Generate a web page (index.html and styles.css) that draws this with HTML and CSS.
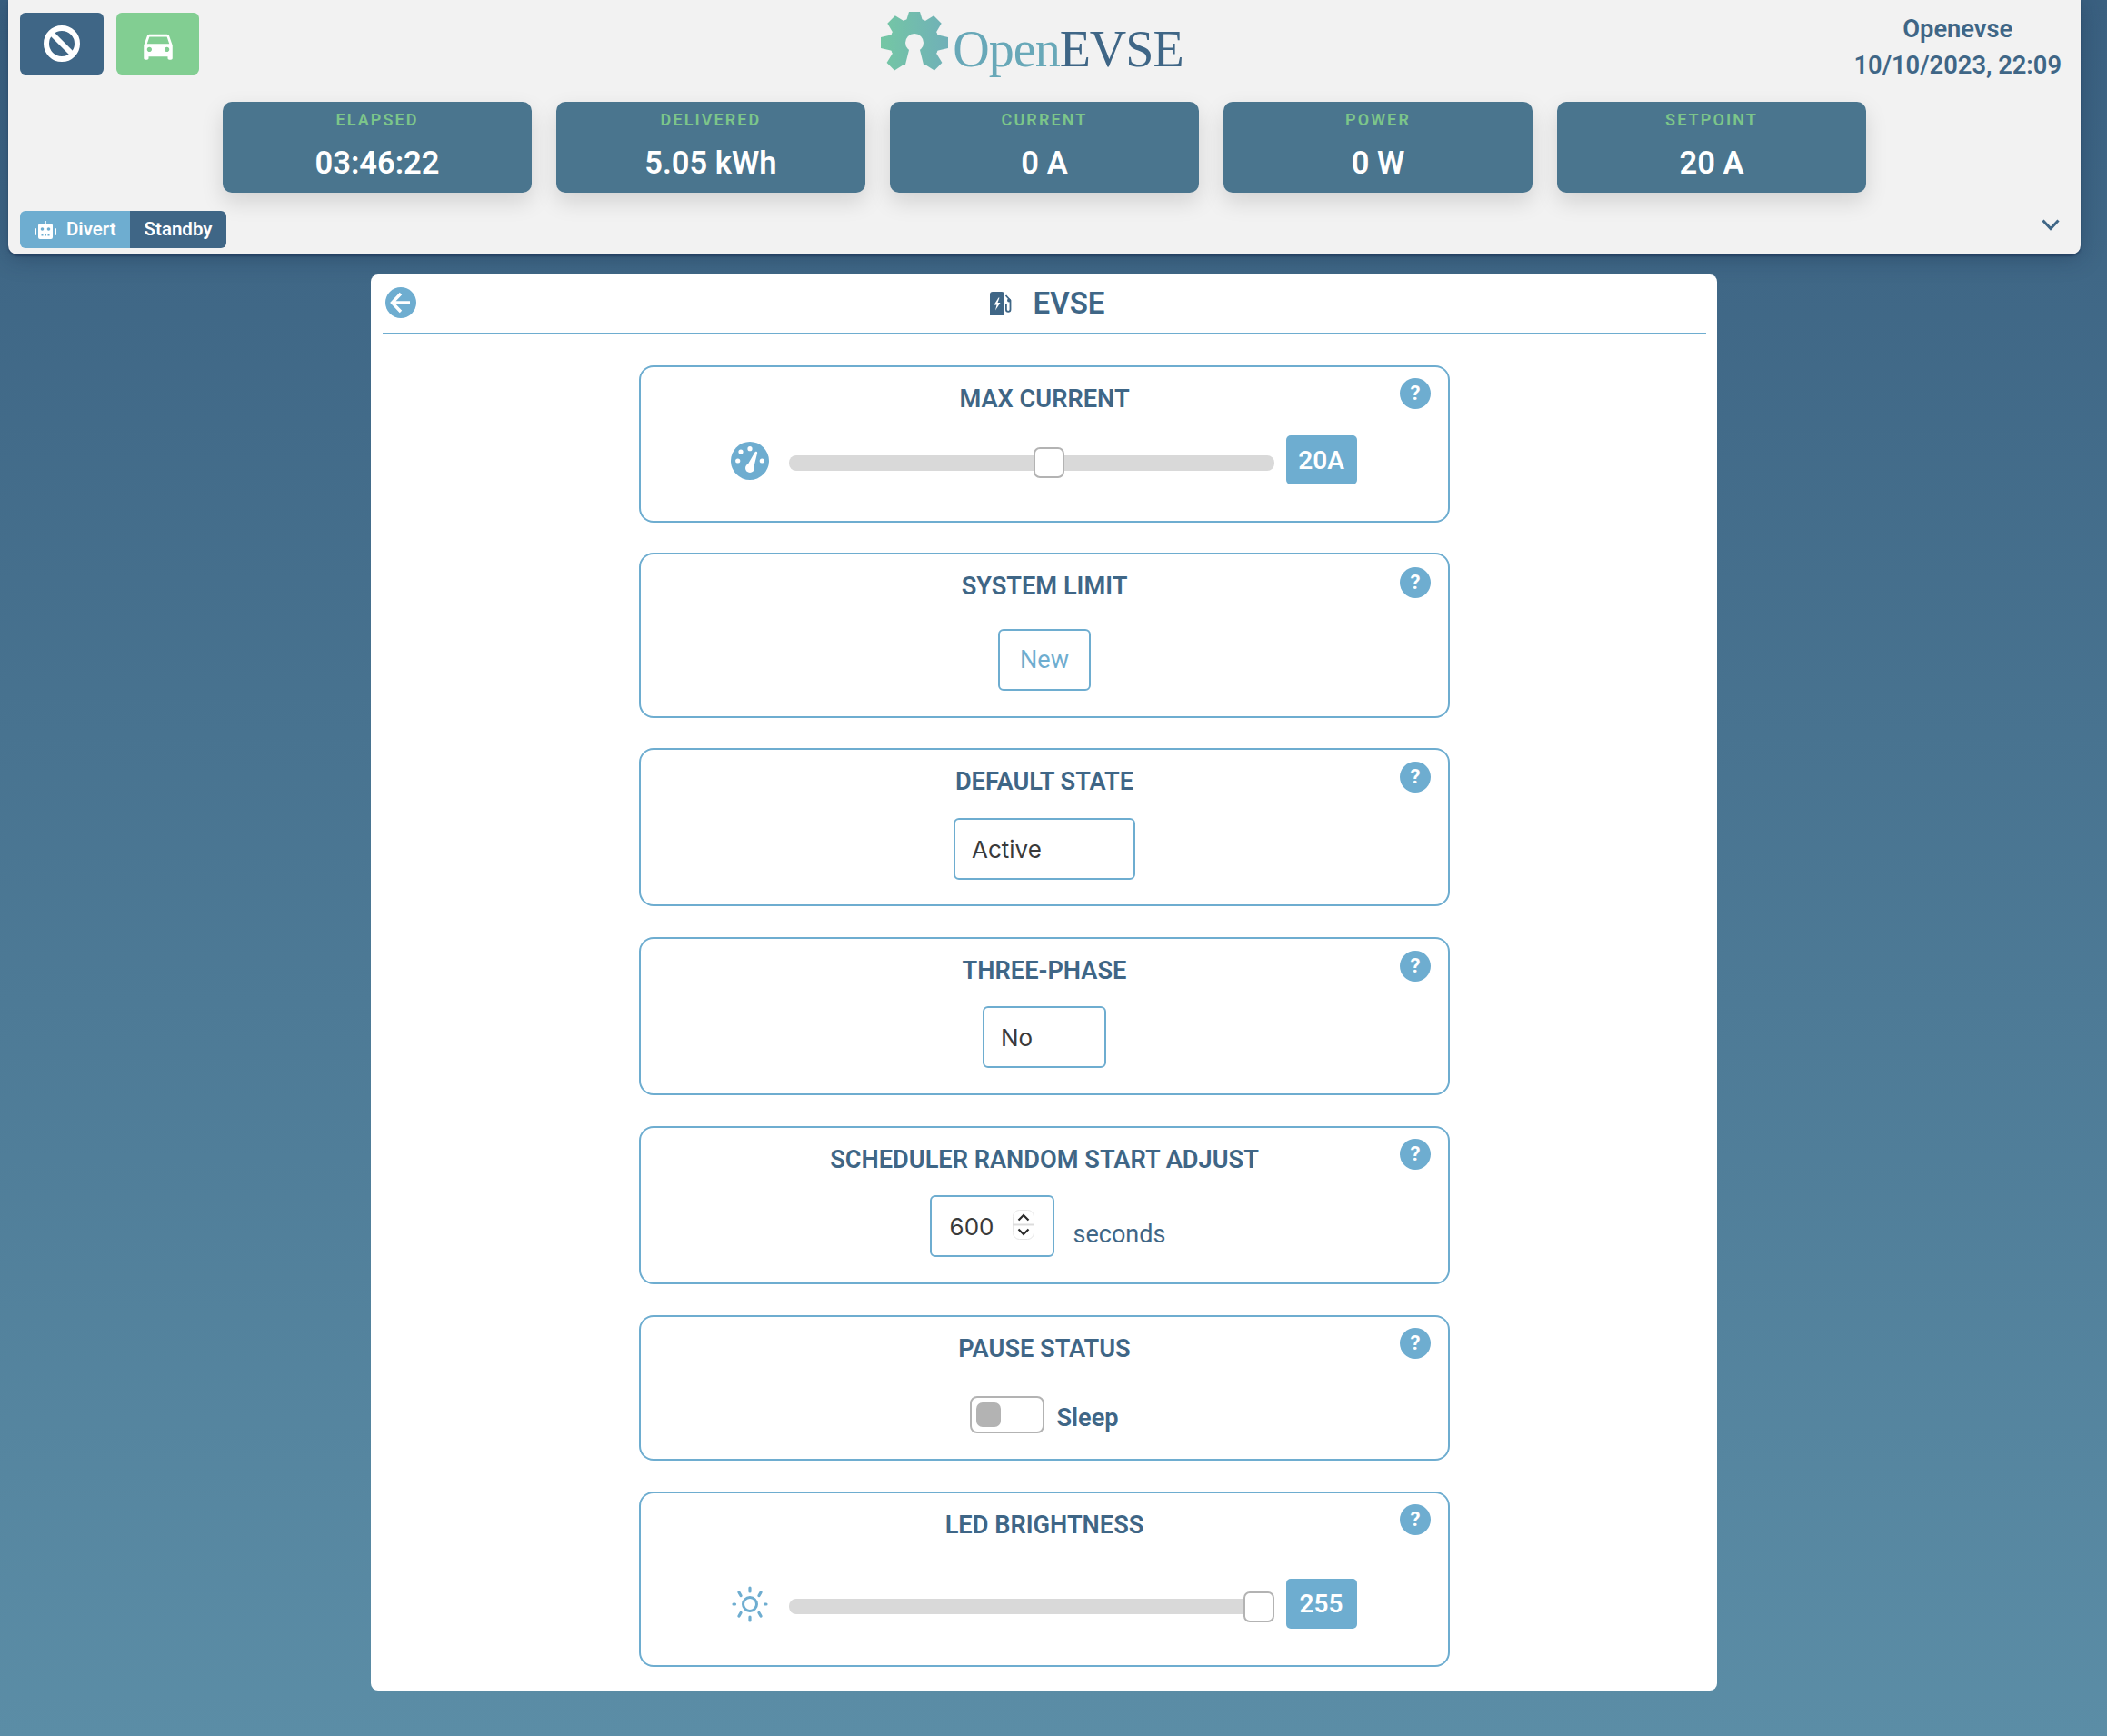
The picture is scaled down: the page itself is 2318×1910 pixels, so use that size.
FILE: index.html
```html
<!DOCTYPE html>
<html lang="en">
<head>
<meta charset="utf-8">
<title>OpenEVSE</title>
<link rel="stylesheet" href="styles.css">
</head>
<body>
<header class="topbar">
  <div class="top-row">
    <div class="mode-buttons">
      <div class="mode-btn mode-btn-dark">
        <svg class="icon-block" viewBox="0 0 40 40"><circle cx="20" cy="20" r="17" fill="none" stroke="#fff" stroke-width="6"/><path d="M8 8l24 24" stroke="#fff" stroke-width="6" fill="none"/></svg>
      </div>
      <div class="mode-btn mode-btn-green">
        <svg class="icon-car" viewBox="0 0 24 24"><path fill="#fff" d="M18.92 6.01C18.72 5.42 18.16 5 17.5 5h-11c-.66 0-1.21.42-1.42 1.01L3 12v8c0 .55.45 1 1 1h1c.55 0 1-.45 1-1v-1h12v1c0 .55.45 1 1 1h1c.55 0 1-.45 1-1v-8l-2.08-5.99zM6.5 16c-.83 0-1.5-.67-1.5-1.5S5.67 13 6.5 13s1.5.67 1.5 1.5S7.33 16 6.5 16zm11 0c-.83 0-1.5-.67-1.5-1.5s.67-1.5 1.5-1.5 1.5.67 1.5 1.5-.67 1.5-1.5 1.5zM5 11l1.5-4.5h11L19 11H5z"/></svg>
      </div>
    </div>
    <div class="logo">
      <svg class="logo-gear" viewBox="-37 -34 74 65">
        <defs>
          <linearGradient id="gearFill" x1="0" y1="0" x2="1" y2="0"><stop offset="0" stop-color="#74c7a4"/><stop offset="1" stop-color="#70b0b8"/></linearGradient>
          <mask id="gearMask" maskUnits="userSpaceOnUse" x="-37" y="-34" width="74" height="65">
            <g fill="#fff">
              <circle r="27"/>
              <path d="M-9 -24L-6 -34H6L9 -24Z"/>
              <path d="M-9 -24L-6 -36H6L9 -24Z" transform="rotate(45)"/>
              <path d="M-9 -24L-6 -37H6L9 -24Z" transform="rotate(90)"/>
              <path d="M-9 -24L-6 -37H6L9 -24Z" transform="rotate(135)"/>
              <path d="M-9 -24L-6 -37H6L9 -24Z" transform="rotate(225)"/>
              <path d="M-9 -24L-6 -37H6L9 -24Z" transform="rotate(270)"/>
              <path d="M-9 -24L-6 -36H6L9 -24Z" transform="rotate(315)"/>
            </g>
            <circle cy="0" r="10" fill="#000"/>
            <path d="M-5 4L-14 40H14L5 4Z" fill="#000"/>
          </mask>
        </defs>
        <rect x="-37" y="-34" width="74" height="65" fill="url(#gearFill)" mask="url(#gearMask)"/>
      </svg>
      <span class="logo-text"><span class="logo-open">Open</span><span class="logo-evse">EVSE</span></span>
    </div>
    <div class="device-info">
      <div>Openevse</div>
      <div>10/10/2023, 22:09</div>
    </div>
  </div>
  <div class="stats">
    <div class="stat"><div class="stat-label">ELAPSED</div><div class="stat-value">03:46:22</div></div>
    <div class="stat"><div class="stat-label">DELIVERED</div><div class="stat-value">5.05 kWh</div></div>
    <div class="stat"><div class="stat-label">CURRENT</div><div class="stat-value">0 A</div></div>
    <div class="stat"><div class="stat-label">POWER</div><div class="stat-value">0 W</div></div>
    <div class="stat"><div class="stat-label">SETPOINT</div><div class="stat-value">20 A</div></div>
  </div>
  <div class="bottom-row">
    <div class="status-pill">
      <div class="status-divert">
        <svg class="icon-robot" viewBox="0 0 24 20"><path fill="#fff" d="M11.2 0h1.6v3h5.2a2 2 0 0 1 2 2v13a2 2 0 0 1-2 2H6a2 2 0 0 1-2-2V5a2 2 0 0 1 2-2h5.200z"/><rect x="0" y="8" width="2" height="8" rx="1" fill="#fff"/><rect x="22" y="8" width="2" height="8" rx="1" fill="#fff"/><circle cx="8.500" cy="9" r="1.800" fill="#6eadd0"/><circle cx="15.500" cy="9" r="1.800" fill="#6eadd0"/><path d="M7.500 15h2v1.500h-2zM11 15h2v1.500h-2zM14.500 15h2v1.500h-2z" fill="#6eadd0"/></svg>
        <span>Divert</span>
      </div>
      <div class="status-state">Standby</div>
    </div>
    <svg class="icon-chevron" viewBox="0 0 20 13"><path d="M1.500 1.500l8.500 9 8.500-9" fill="none" stroke="#3f6686" stroke-width="3"/></svg>
  </div>
</header>

<main class="panel">
  <div class="panel-head">
    <svg class="icon-back" viewBox="0 0 34 34"><circle cx="17" cy="17" r="17" fill="#6eadd0"/><path d="M17 7L7.500 17l9.500 10M8 17h19" fill="none" stroke="#fff" stroke-width="3.400"/></svg>
    <svg class="icon-pump" viewBox="0 0 25 26"><path fill="#3f6686" d="M3 0h10a3 3 0 0 1 3 3v23H0V3a3 3 0 0 1 3-3z"/><path fill="#fff" d="M9.500 6.500L4.500 14.500h3l-1.500 6 5.500-8.500h-3l2-5.500z"/><path d="M17.500 4l5 5.500v10a2.300 2.300 0 0 1-4.600 0V14" fill="none" stroke="#3f6686" stroke-width="1.800"/><circle cx="21" cy="9.500" r="2" fill="#3f6686"/></svg>
    <h1 class="panel-title">EVSE</h1>
  </div>

  <section class="box box-slider">
    <h2 class="box-title">MAX CURRENT</h2>
    <span class="help">?</span>
    <div class="slider-row">
      <svg class="icon-gauge" viewBox="0 0 42 42"><circle cx="21" cy="21" r="21" fill="#6eadd0"/><circle cx="21" cy="7.700" r="2.600" fill="#fff"/><circle cx="11" cy="11" r="2.600" fill="#fff"/><circle cx="7.700" cy="21" r="2.600" fill="#fff"/><circle cx="34.300" cy="21" r="2.600" fill="#fff"/><circle cx="21" cy="29" r="5" fill="#fff"/><path d="M17.500 27L26.500 11.500a1.400 1.400 0 0 1 2.600 1L25 29Z" fill="#fff"/></svg>
      <input class="slider" type="range" min="6" max="32" value="20" aria-label="Max current">
      <div class="badge">20A</div>
    </div>
  </section>

  <section class="box box-button">
    <h2 class="box-title">SYSTEM LIMIT</h2>
    <span class="help">?</span>
    <div class="control-row"><button class="btn-new" type="button">New</button></div>
  </section>

  <section class="box">
    <h2 class="box-title">DEFAULT STATE</h2>
    <span class="help">?</span>
    <div class="control-row"><div class="field field-state">Active</div></div>
  </section>

  <section class="box box-loose">
    <h2 class="box-title">THREE-PHASE</h2>
    <span class="help">?</span>
    <div class="control-row"><div class="field field-phase">No</div></div>
  </section>

  <section class="box box-loose box-number">
    <h2 class="box-title">SCHEDULER RANDOM START ADJUST</h2>
    <span class="help">?</span>
    <div class="control-row control-number">
      <div class="field field-number">
        <span>600</span>
        <svg class="icon-spin" viewBox="0 0 24 33"><rect x=".5" y=".5" width="23" height="32" rx="7" fill="#fff" stroke="#e6e6e6"/><path d="M0 16.500h24" stroke="#dcdcdc" stroke-width="2"/><path d="M6.500 11.500L12 6l5.500 5.500M6.500 21.500L12 27l5.500-5.500" fill="none" stroke="#2b2b2b" stroke-width="2.200"/></svg>
      </div>
      <span class="unit">seconds</span>
    </div>
  </section>

  <section class="box box-toggle">
    <h2 class="box-title">PAUSE STATUS</h2>
    <span class="help">?</span>
    <div class="control-row control-toggle">
      <div class="toggle"><span class="toggle-knob"></span></div>
      <span class="toggle-label">Sleep</span>
    </div>
  </section>

  <section class="box box-slider box-led">
    <h2 class="box-title">LED BRIGHTNESS</h2>
    <span class="help">?</span>
    <div class="slider-row">
      <svg class="icon-sun" viewBox="0 0 40 40"><circle cx="20" cy="20" r="7.500" fill="none" stroke="#6eadd0" stroke-width="3"/><g stroke="#6eadd0" stroke-width="3.200" stroke-linecap="round"><path d="M20 2v4M20 34v4M2 20h1.500M36.500 20H38M8 7l2 3.500M32 7l-2 3.500M8 33l2-3.500M32 33l-2-3.500"/></g></svg>
      <input class="slider" type="range" min="0" max="255" value="255" aria-label="LED brightness">
      <div class="badge">255</div>
    </div>
  </section>
</main>
</body>
</html>
```
FILE: styles.css
```css
* { box-sizing: border-box; }
html, body { margin: 0; padding: 0; }
body {
  min-height: 1910px;
  padding: 0 29px 0 9px;
  background: linear-gradient(#3a6080, #5b8da6);
  font-family: Roboto, "Liberation Sans", sans-serif;
  color: #3f6686;
}

/* top bar */
.topbar {
  height: 280px;
  padding: 14px 21px 0 13px;
  background: #f2f2f2;
  border-radius: 0 0 10px 10px;
  box-shadow: 0 2px 2px rgba(30, 55, 90, .7), 0 4px 24px rgba(20, 40, 70, .35);
}
.top-row {
  height: 98px;
  display: grid;
  grid-template-columns: 1fr auto 1fr;
  align-items: start;
}
.mode-buttons { display: flex; gap: 14px; }
.mode-btn {
  width: 92px;
  height: 68px;
  border-radius: 6px;
  display: flex;
  align-items: center;
  justify-content: center;
}
.mode-btn-dark { background: #3f6686; }
.mode-btn-green { background: #82ce92; width: 91px; }
.icon-block { width: 40px; height: 40px; }
.icon-car { width: 42px; height: 42px; margin-top: 4px; }

.logo {
  display: flex;
  align-items: flex-start;
  margin: -1px 19px 0 0;
}
.logo-gear { width: 74px; height: 65px; flex: none; }
.logo-text {
  margin: 11px 0 0 5px;
  font: 400 56px/60px "Liberation Serif", serif;
  letter-spacing: -1px;
}
.logo-open { color: #68a8b8; }
.logo-evse { color: #3f6686; }

.device-info {
  justify-self: end;
  margin-top: -2px;
  font-weight: 600;
  font-size: 27.300px;
  line-height: 40px;
  text-align: center;
}

.stats {
  display: flex;
  justify-content: center;
  gap: 27px;
  margin-right: -8px;
}
.stat {
  width: 340px;
  height: 100px;
  padding-top: 8px;
  text-align: center;
  background: #4a758e;
  border-radius: 10px;
  box-shadow: 0 10px 24px rgba(0, 0, 0, .13);
}
.stat-label {
  font-weight: 600;
  font-size: 18px;
  line-height: 24px;
  letter-spacing: 2.100px;
  color: #7cc58a;
}
.stat-value {
  margin-top: 15px;
  font-weight: 600;
  font-size: 34.500px;
  line-height: 40px;
  color: #fff;
}

.bottom-row {
  margin-top: 20px;
  display: flex;
  align-items: center;
  justify-content: space-between;
}
.status-pill {
  display: flex;
  height: 41px;
  border-radius: 6px;
  overflow: hidden;
  font-weight: 600;
  font-size: 20.500px;
  line-height: 39px;
  color: #fff;
}
.status-divert {
  width: 121px;
  display: flex;
  align-items: center;
  gap: 11px;
  padding-left: 16px;
  background: #6eadd0;
}
.status-state {
  width: 106px;
  display: flex;
  align-items: center;
  justify-content: center;
  background: #3f6686;
}
.icon-robot { width: 24px; height: 20px; flex: none; }
.icon-chevron { width: 20px; height: 13px; margin: 0 2px 11px 0; }

/* main panel */
.panel {
  width: 1481px;
  height: 1558px;
  margin: 22px 0 0 399px;
  padding: 13px 12px 0 13px;
  background: #fff;
  border-radius: 8px;
}
.panel-head {
  position: relative;
  display: flex;
  align-items: center;
  justify-content: center;
  gap: 23px;
  padding: 0 0 13px 6px;
  border-bottom: 2px solid #6eadd0;
}
.icon-back {
  position: absolute;
  left: 3px;
  top: 1px;
  width: 34px;
  height: 34px;
}
.icon-pump { width: 25px; height: 26px; }
.panel-title {
  margin: 0;
  font-weight: 600;
  font-size: 33px;
  line-height: 38px;
}

.box {
  position: relative;
  width: 892px;
  margin: 34px auto 0;
  padding: 17px 0 27px;
  border: 2px solid #6eadd0;
  border-radius: 16px;
  text-align: center;
}
.box-slider + .box-button,
.box-button + .box { margin-top: 33px; }
.box-title {
  margin: 0;
  font-weight: 600;
  font-size: 27.200px;
  line-height: 36px;
}
.help {
  position: absolute;
  top: 13px;
  right: 19px;
  width: 34px;
  height: 34px;
  border-radius: 50%;
  background: #6eadd0;
  color: #fff;
  font-weight: 700;
  font-size: 22px;
  line-height: 34px;
}
.box-slider .help,
.box-number .help,
.box-toggle .help { top: 12px; }
.box-button .help { top: 14px; }

.control-row {
  margin-top: 22px;
  display: flex;
  justify-content: center;
}
.box-button { padding-bottom: 28px; }
.box-button .control-row { margin-top: 29px; }
.box-loose { padding-bottom: 28px; }
.box-loose .control-row { margin-top: 21px; }
.box-toggle .control-row { margin-top: 34px; }
.control-number { padding-left: 7px; }

.field {
  height: 68px;
  display: flex;
  align-items: center;
  border: 2px solid #6eadd0;
  border-radius: 6px;
  font-family: Inter, Roboto, sans-serif;
  font-size: 26px;
  color: #3a3a3a;
  text-align: left;
}
.field-state { width: 200px; padding-left: 18px; }
.field-phase { width: 136px; padding-left: 18px; }
.field-number {
  width: 137px;
  padding-left: 20px;
  justify-content: space-between;
  padding-right: 20px;
}
.icon-spin { width: 24px; height: 33px; margin-top: -4px; }
.unit {
  margin: 25px 0 0 21px;
  font-size: 27px;
  line-height: 36px;
}

.btn-new {
  width: 102px;
  height: 68px;
  padding: 0;
  background: #fff;
  border: 2px solid #6eadd0;
  border-radius: 6px;
  font-family: Roboto, sans-serif;
  font-size: 27px;
  color: #6eadd0;
}

.toggle {
  width: 82px;
  height: 41px;
  padding: 5px;
  border: 2px solid #b3b3b3;
  border-radius: 8px;
  background: #fff;
}
.toggle-knob {
  display: block;
  width: 27px;
  height: 27px;
  border-radius: 7px;
  background: #b3b3b3;
}
.toggle-label {
  margin: 6px 0 0 13px;
  font-weight: 600;
  font-size: 27.200px;
  line-height: 36px;
}

/* sliders */
.slider-row {
  margin: 22px auto 0;
  width: 691px;
  display: flex;
  align-items: center;
}
.box-slider { padding-bottom: 40px; }
.box-led .slider-row { margin-top: 41px; }
.box-led .badge { height: 55px; }
.icon-gauge { width: 42px; height: 42px; flex: none; margin-top: 2px; }
.icon-sun { width: 40px; height: 40px; flex: none; margin: 0 1px; }
.slider {
  -webkit-appearance: none;
  appearance: none;
  width: 534px;
  height: 34px;
  margin: 6px 13px 0 22px;
  padding: 0;
  background: transparent;
}
.slider::-webkit-slider-runnable-track {
  height: 17px;
  background: #d9d9d9;
  border-radius: 8px;
}
.slider::-webkit-slider-thumb {
  -webkit-appearance: none;
  width: 34px;
  height: 34px;
  margin-top: -8.500px;
  background: #fff;
  border: 2px solid #b3b3b3;
  border-radius: 7px;
}
.badge {
  width: 78px;
  height: 54px;
  border-radius: 5px;
  background: #6eadd0;
  color: #fff;
  font-weight: 600;
  font-size: 28px;
  line-height: 55px;
}
```
